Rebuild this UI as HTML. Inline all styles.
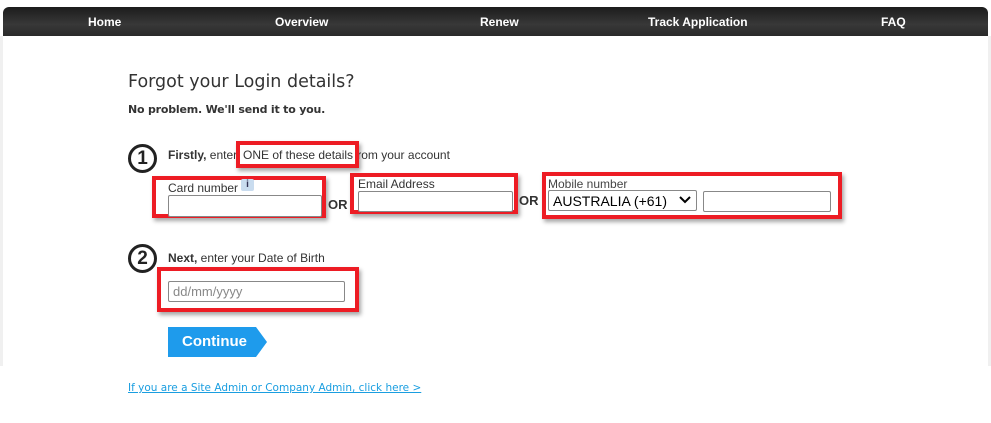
<!DOCTYPE html>
<html><head><style>
body{margin:0;width:991px;height:423px;background:#fff;position:relative;overflow:hidden;font-family:"Liberation Sans",sans-serif;color:#222}
.a{position:absolute}
.nav{left:3px;top:7px;width:985px;height:29px;background:linear-gradient(#1c1c1c,#383838 60%,#2a2a2a);border-radius:6px 6px 0 0}
.nav span{position:absolute;top:8px;color:#fff;font-weight:bold;font-size:12px}
.red{border:4px solid #ed1c24;box-shadow:2px 3px 4px rgba(0,0,0,.35);box-sizing:border-box}
.in{border:1px solid #888;border-radius:2px;background:#fff;box-sizing:border-box}
.lbl{font-size:12px;color:#333}
.circ{width:29px;height:29px;border:3px solid #222;border-radius:50%;box-sizing:border-box;font-weight:bold;font-size:19px;text-align:center;line-height:23px;color:#222}
.or{font-weight:bold;font-size:13px;color:#333}
</style></head><body>
<div class="a" style="left:0;top:36px;width:3px;height:330px;background:#f0f0f0"></div>
<div class="a" style="left:988px;top:36px;width:3px;height:330px;background:#f0f0f0"></div>
<div class="a nav">
<span style="left:85px">Home</span><span style="left:272px">Overview</span><span style="left:477px">Renew</span><span style="left:645px">Track Application</span><span style="left:878px">FAQ</span>
</div>
<div class="a" style="left:128px;top:72px;font-size:17.5px;color:#333;font-family:'DejaVu Sans',sans-serif">Forgot your Login details?</div>
<div class="a" style="left:128px;top:103px;font-size:11px;font-weight:bold;color:#333;font-family:'DejaVu Sans',sans-serif;letter-spacing:-0.2px">No problem. We'll send it to you.</div>
<div class="a circ" style="left:128px;top:144px">1</div>
<div class="a lbl" style="left:168px;top:148px"><b>Firstly,</b> enter ONE of these details from your account</div>
<div class="a red" style="left:236px;top:141px;width:123px;height:27px;background:#fff"></div>
<div class="a lbl" style="left:243px;top:148px">ONE of these details</div>
<div class="a red" style="left:152px;top:176px;width:174px;height:42px"></div>
<div class="a lbl" style="left:168px;top:181px">Card number</div>
<div class="a" style="left:241px;top:179px;width:13px;height:12px;background:#c9dcef;border-radius:2px;font-size:10px;font-weight:bold;text-align:center;line-height:12px;color:#335">i</div>
<div class="a in" style="left:168px;top:195px;width:154px;height:22px"></div>
<div class="a or" style="left:328px;top:197px">OR</div>
<div class="a red" style="left:350px;top:173px;width:168px;height:41px"></div>
<div class="a lbl" style="left:358px;top:177px">Email Address</div>
<div class="a in" style="left:358px;top:191px;width:155px;height:21px"></div>
<div class="a or" style="left:519px;top:193px">OR</div>
<div class="a red" style="left:542px;top:172px;width:300px;height:47px"></div>
<div class="a lbl" style="left:548px;top:177px;color:#444">Mobile number</div>
<div class="a in" style="left:548px;top:190px;width:149px;height:21px;font-size:14px;color:#000;padding:2px 4px;line-height:16px">AUSTRALIA (+61)</div>
<svg class="a" style="left:679px;top:196px" width="12" height="8"><path d="M1 1l5 5 5-5" stroke="#000" stroke-width="2" fill="none"/></svg>
<div class="a in" style="left:703px;top:191px;width:128px;height:21px"></div>
<div class="a circ" style="left:128px;top:244px">2</div>
<div class="a lbl" style="left:168px;top:251px"><b>Next,</b> enter your Date of Birth</div>
<div class="a red" style="left:157px;top:267px;width:202px;height:45px"></div>
<div class="a in" style="left:168px;top:281px;width:177px;height:21px;font-size:13px;color:#888;padding:2px 4px;line-height:16px">dd/mm/yyyy</div>
<svg class="a" style="left:168px;top:327px" width="100" height="30"><path d="M0 0H88L99 15 88 30H0Z" fill="#1e9bec"/></svg>
<div class="a" style="left:182px;top:333px;font-size:15px;font-weight:bold;color:#fff">Continue</div>
<div class="a" style="left:128px;top:382px;font-size:10.5px;color:#1a9ee0;text-decoration:underline;font-family:'DejaVu Sans',sans-serif">If you are a Site Admin or Company Admin, click here &gt;</div>
</body></html>
